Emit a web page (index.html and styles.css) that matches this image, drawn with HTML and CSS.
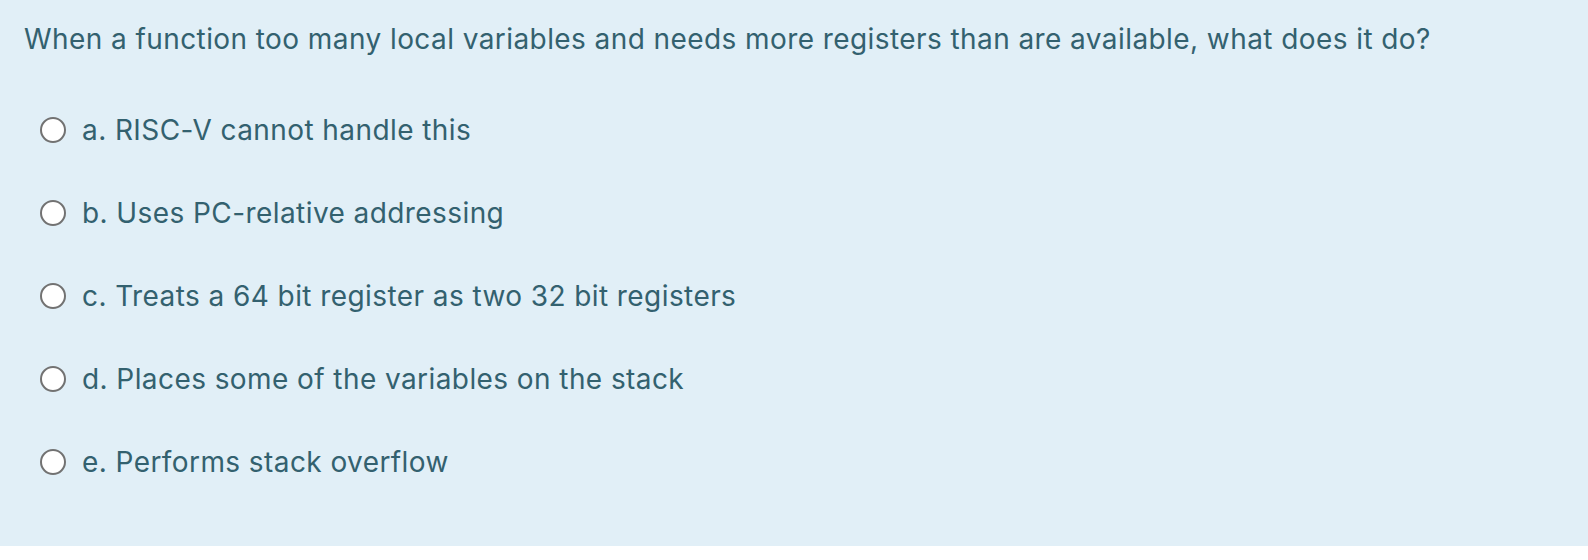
FILE: index.html
```html
<!DOCTYPE html>
<html>
<head>
<meta charset="utf-8">
<link rel="stylesheet" href="styles.css">
</head>
<body>
<div class="formulation">
  <div class="qtext">When a function too many local variables and needs more registers than are available, what does it do?</div>
  <div class="answers">
    <label class="option"><span class="radio"></span><span class="label">a. RISC-V cannot handle this</span></label>
    <label class="option"><span class="radio"></span><span class="label">b. Uses PC-relative addressing</span></label>
    <label class="option"><span class="radio"></span><span class="label">c. Treats a 64 bit register as two 32 bit registers</span></label>
    <label class="option"><span class="radio"></span><span class="label">d. Places some of the variables on the stack</span></label>
    <label class="option"><span class="radio"></span><span class="label">e. Performs stack overflow</span></label>
  </div>
</div>
</body>
</html>
```
FILE: styles.css
```css
html, body {
  margin: 0;
  padding: 0;
  background: #ffffff;
}
.formulation {
  background: #e1eff7;
  color: #33616f;
  font-family: Inter, "Noto Sans", sans-serif;
  font-size: 28px;
  letter-spacing: 0.42px;
  height: 546px;
  box-sizing: border-box;
  padding-top: 19px;
}
.qtext {
  line-height: 40px;
  padding-left: 24px;
  white-space: nowrap;
}
.answers {
  margin-top: 51px;
  display: flex;
  flex-direction: column;
  gap: 43px;
}
.option {
  display: flex;
  align-items: center;
  height: 40px;
  line-height: 40px;
  padding-left: 40px;
}
.radio {
  width: 26px;
  height: 26px;
  box-sizing: border-box;
  border: 2px solid #727272;
  border-radius: 50%;
  background: #ffffff;
  flex: none;
}
.label {
  margin-left: 16px;
  white-space: nowrap;
}
```
